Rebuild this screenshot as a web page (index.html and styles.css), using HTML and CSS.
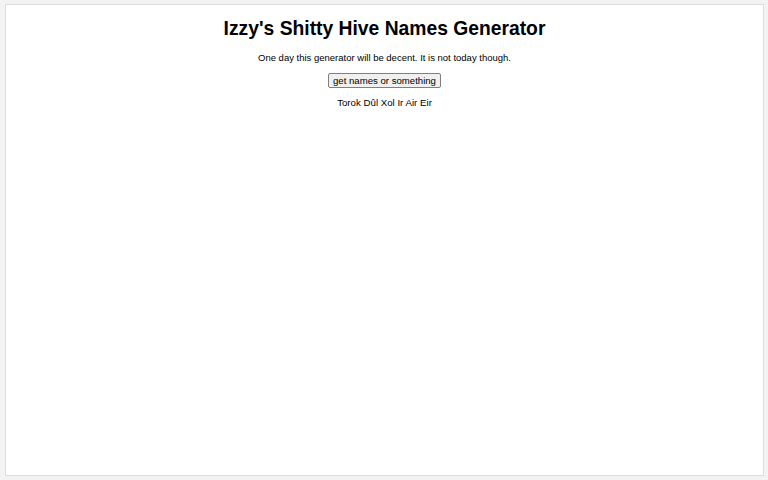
FILE: index.html
```html
<!DOCTYPE html>
<html>
<head>
<meta charset="utf-8">
<link rel="stylesheet" href="styles.css">
</head>
<body>
<div class="page">
  <h1 class="title">Izzy's Shitty Hive Names Generator</h1>
  <p class="tagline">One day this generator will be decent. It is not today though.</p>
  <button class="btn">get names or something</button>
  <p class="names">Torok Dûl Xol Ir Air Eir</p>
</div>
</body>
</html>
```
FILE: styles.css
```css
html, body {
  margin: 0;
  padding: 0;
  height: 100%;
}
body {
  background: #f3f3f3;
  font-family: "Liberation Sans", Arial, sans-serif;
  color: #000;
  padding: 4px 4px 4px 5px;
  box-sizing: border-box;
}
.page {
  background: #fff;
  border: 1px solid #dcdcdc;
  height: 100%;
  box-sizing: border-box;
  text-align: center;
  padding-top: 13px;
}
.title {
  font-size: 19.3px;
  font-weight: bold;
  margin: 0;
  line-height: 22px;
}
.tagline {
  font-size: 9.5px;
  margin: 12px 0 0;
  line-height: 12px;
}
.btn {
  display: block;
  margin: 9px auto 0;
  font-family: "Liberation Sans", Arial, sans-serif;
  font-size: 9.6px;
  padding: 1px 4px;
  line-height: 11px;
  height: 15px;
  box-sizing: border-box;
  background: #f0f0f0;
  border: 1px solid #808080;
  border-radius: 2px;
  color: #000;
}
.names {
  font-size: 9.7px;
  margin: 9px 0 0;
  line-height: 12px;
}
```
